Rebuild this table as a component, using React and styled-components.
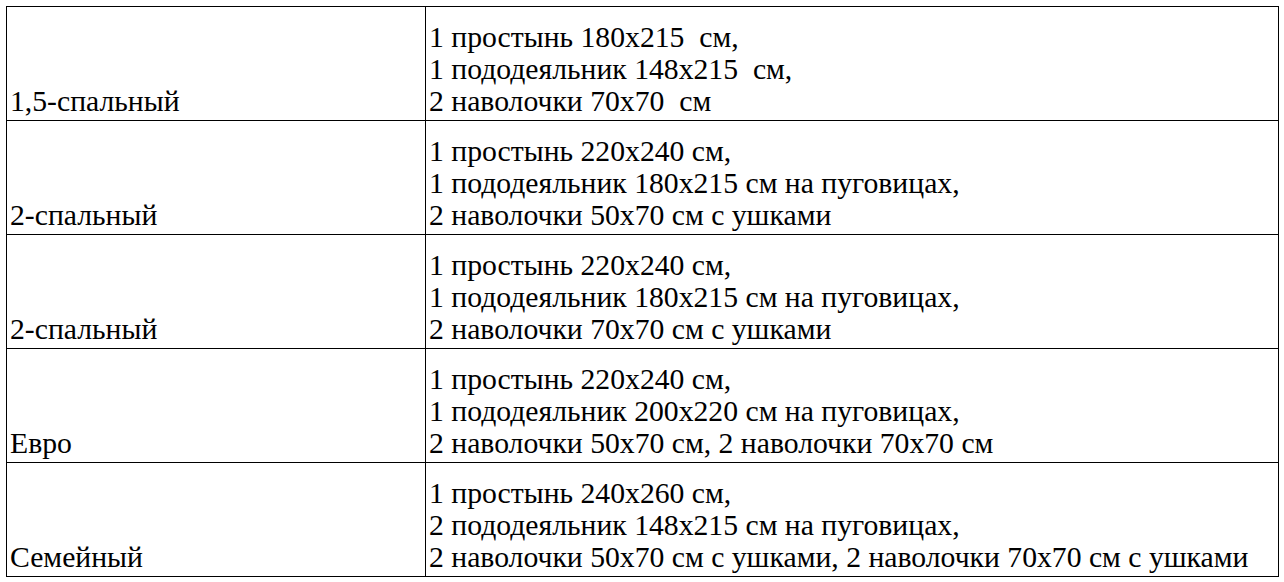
import React from "react";
import styled, { createGlobalStyle } from "styled-components";

const Global = createGlobalStyle`
  html, body { margin: 0; padding: 0; background: #fff; }
  body { padding: 6px; font-family: "Liberation Serif", "Times New Roman", serif; color: #000; }
`;

const Table = styled.table`
  border-collapse: collapse;
  width: 1273px;
  table-layout: fixed;
  font-family: "Liberation Serif", "Times New Roman", serif;
  font-size: 29.7px;
  line-height: 32px;
  color: #000;
`;

const Row = styled.tr`
  height: 114px;
`;

const Cell = styled.td`
  border: 1px solid #000;
  vertical-align: bottom;
  padding: 0 0 3px 3px;
  white-space: pre;
  width: ${(p) => (p.$narrow ? "415px" : "auto")};
`;

const rows = [
  ["1,5-спальный", "1 простынь 180x215  см,\n1 пододеяльник 148x215  см,\n2 наволочки 70x70  см"],
  ["2-спальный", "1 простынь 220x240 см,\n1 пододеяльник 180x215 см на пуговицах,\n2 наволочки 50x70 см с ушками"],
  ["2-спальный", "1 простынь 220x240 см,\n1 пододеяльник 180x215 см на пуговицах,\n2 наволочки 70x70 см с ушками"],
  ["Евро", "1 простынь 220x240 см,\n1 пододеяльник 200x220 см на пуговицах,\n2 наволочки 50x70 см, 2 наволочки 70x70 см"],
  ["Семейный", "1 простынь 240x260 см,\n2 пододеяльник 148x215 см на пуговицах,\n2 наволочки 50x70 см с ушками, 2 наволочки 70x70 см с ушками"],
];

export default function App() {
  return (
    <>
      <Global />
      <Table>
        <tbody>
          {rows.map(([a, b], i) => (
            <Row key={i}>
              <Cell $narrow>{a}</Cell>
              <Cell>{b}</Cell>
            </Row>
          ))}
        </tbody>
      </Table>
    </>
  );
}
